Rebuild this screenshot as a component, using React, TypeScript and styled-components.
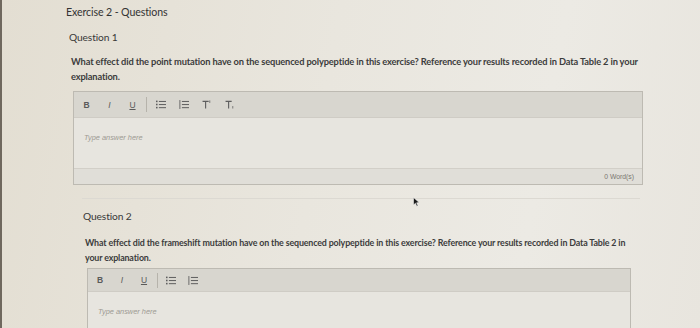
import React from "react";
import styled, { createGlobalStyle } from "styled-components";

const Global = createGlobalStyle`
  html, body { margin: 0; padding: 0; }
  body { width: 700px; height: 328px; overflow: hidden; background: #e6e3db; }
`;

const Page = styled.div`
  position: relative;
  width: 700px;
  height: 328px;
  overflow: hidden;
  box-sizing: border-box;
  border-left: 2px solid #6f685e;
  background: linear-gradient(100deg, #e3ded2 0%, #e9e6de 45%, #eceae4 75%, #e8e5de 100%);
  font-family: Lato, "Open Sans", sans-serif;
  color: #3a3a3a;
  display: flex;
  flex-direction: column;
`;

const Title = styled.h1`
  margin: 6px 0 0 64px;
  font-size: 10.6px;
  font-weight: 400;
  letter-spacing: -0.1px;
  color: #333;
`;

const Section = styled.section<{ $left: number; $right: number; $top: number }>`
  margin: ${(p) => p.$top}px ${(p) => p.$right}px 0 ${(p) => p.$left}px;
  display: flex;
  flex-direction: column;
`;

const Heading = styled.h2`
  margin: 0;
  font-size: 10.2px;
  font-weight: 400;
  color: #383838;
  letter-spacing: -0.1px;
`;

const Prompt = styled.p<{ $top: number; $line: number; $size: number }>`
  margin: ${(p) => p.$top}px 0 0 2px;
  font-size: ${(p) => p.$size}px;
  line-height: ${(p) => p.$line}px;
  font-weight: 700;
  letter-spacing: -0.15px;
  color: #3c3c3c;
`;

const Editor = styled.div<{ $top: number }>`
  margin: ${(p) => p.$top}px 0 0 4px;
  border: 1px solid #bdbab2;
  display: flex;
  flex-direction: column;
  background: #e7e5df;
`;

const Toolbar = styled.div<{ $h: number }>`
  height: ${(p) => p.$h}px;
  background: #d8d6cf;
  display: flex;
  align-items: center;
  padding-left: 1px;
  border-bottom: 1px solid #cfccc5;
`;

const ToolButton = styled.span<{ $w: number }>`
  width: ${(p) => p.$w}px;
  display: flex;
  justify-content: center;
  align-items: center;
  font-family: "Liberation Sans", Arial, sans-serif;
  font-size: 8.5px;
  color: #5a5a5a;
`;

const Divider = styled.span`
  width: 1px;
  height: 15px;
  background: #b6b3ab;
  margin: 0 2px;
`;

const Body = styled.div<{ $h: number }>`
  height: ${(p) => p.$h}px;
  padding: 15px 10px 0;
  box-sizing: border-box;
  font-family: "Liberation Sans", Arial, sans-serif;
  font-style: italic;
  font-size: 7.4px;
  color: #9d9a93;
`;

const Footer = styled.div`
  height: 15px;
  border-top: 1px solid #d2cfc8;
  background: #e0ded8;
  display: flex;
  justify-content: flex-end;
  align-items: center;
  padding-right: 8px;
  font-family: "Liberation Sans", Arial, sans-serif;
  font-size: 6.8px;
  color: #7a7770;
`;

const Separator = styled.hr`
  margin: 13px 60px 0 80px;
  border: 0;
  border-top: 1px solid #dcd9d2;
`;

const Cursor = styled.svg`
  position: absolute;
  left: 411px;
  top: 197px;
`;

const ico = "#5e5e5e";

const BulletIcon = () => (
  <svg width="10" height="9" viewBox="0 0 9 8">
    <rect x="0" y="0.5" width="1.4" height="1.4" fill={ico} />
    <rect x="0" y="3.3" width="1.4" height="1.4" fill={ico} />
    <rect x="0" y="6.1" width="1.4" height="1.4" fill={ico} />
    <rect x="2.6" y="0.8" width="6.4" height="0.9" fill={ico} />
    <rect x="2.6" y="3.6" width="6.4" height="0.9" fill={ico} />
    <rect x="2.6" y="6.4" width="6.4" height="0.9" fill={ico} />
  </svg>
);

const NumberIcon = () => (
  <svg width="10" height="9" viewBox="0 0 9 8">
    <rect x="0.4" y="0" width="0.8" height="8" fill={ico} />
    <rect x="2.6" y="0.8" width="6.4" height="0.9" fill={ico} />
    <rect x="2.6" y="3.6" width="6.4" height="0.9" fill={ico} />
    <rect x="2.6" y="6.4" width="6.4" height="0.9" fill={ico} />
  </svg>
);

const SupIcon = () => (
  <svg width="10" height="9" viewBox="0 0 9 8">
    <path d="M0.5 1.2 H6 M3.25 1.2 V7.5" stroke={ico} strokeWidth="1" fill="none" />
    <path d="M7 0.3 V2.6" stroke={ico} strokeWidth="0.7" />
  </svg>
);

const SubIcon = () => (
  <svg width="10" height="9" viewBox="0 0 9 8">
    <path d="M0.5 1.2 H6 M3.25 1.2 V7.5" stroke={ico} strokeWidth="1" fill="none" />
    <path d="M7 5.4 V7.6" stroke={ico} strokeWidth="0.7" />
  </svg>
);

type EditorProps = {
  top: number;
  bw: number;
  full: boolean;
  bar: number;
  body: number;
};

const AnswerEditor = ({ top, bw, full, bar, body }: EditorProps) => (
  <Editor $top={top}>
    <Toolbar $h={bar}>
      <ToolButton $w={bw}><b>B</b></ToolButton>
      <ToolButton $w={bw}><i>I</i></ToolButton>
      <ToolButton $w={bw}><u>U</u></ToolButton>
      <Divider />
      <ToolButton $w={bw}><BulletIcon /></ToolButton>
      <ToolButton $w={bw}><NumberIcon /></ToolButton>
      {full && (
        <>
          <ToolButton $w={bw}><SupIcon /></ToolButton>
          <ToolButton $w={bw}><SubIcon /></ToolButton>
        </>
      )}
    </Toolbar>
    <Body $h={body}>Type answer here</Body>
    {full && <Footer>0 Word(s)</Footer>}
  </Editor>
);

export default function App() {
  return (
    <>
      <Global />
      <Page>
        <Title>Exercise 2 - Questions</Title>
        <Section $left={67} $right={57} $top={13}>
          <Heading>Question 1</Heading>
          <Prompt $top={11} $line={15} $size={9.3}>
            What effect did the point mutation have on the sequenced polypeptide in this exercise? Reference your results recorded in Data Table 2 in your explanation.
          </Prompt>
          <AnswerEditor top={7} bw={23} full bar={25} body={50} />
        </Section>
        <Separator />
        <Section $left={81} $right={69} $top={11}>
          <Heading>Question 2</Heading>
          <Prompt $top={13} $line={15} $size={8.9}>
            What effect did the frameshift mutation have on the sequenced polypeptide in this exercise? Reference your results recorded in Data Table 2 in your explanation.
          </Prompt>
          <AnswerEditor top={3} bw={22} full={false} bar={22} body={60} />
        </Section>
        <Cursor width="7" height="10" viewBox="0 0 7 10">
          <path d="M0.5 0.5 L0.5 8 L2.4 6.2 L3.8 9.3 L5 8.8 L3.6 5.8 L6.2 5.6 Z" fill="#1a1a1a" stroke="#ffffff" strokeWidth="0.5" />
        </Cursor>
      </Page>
    </>
  );
}
